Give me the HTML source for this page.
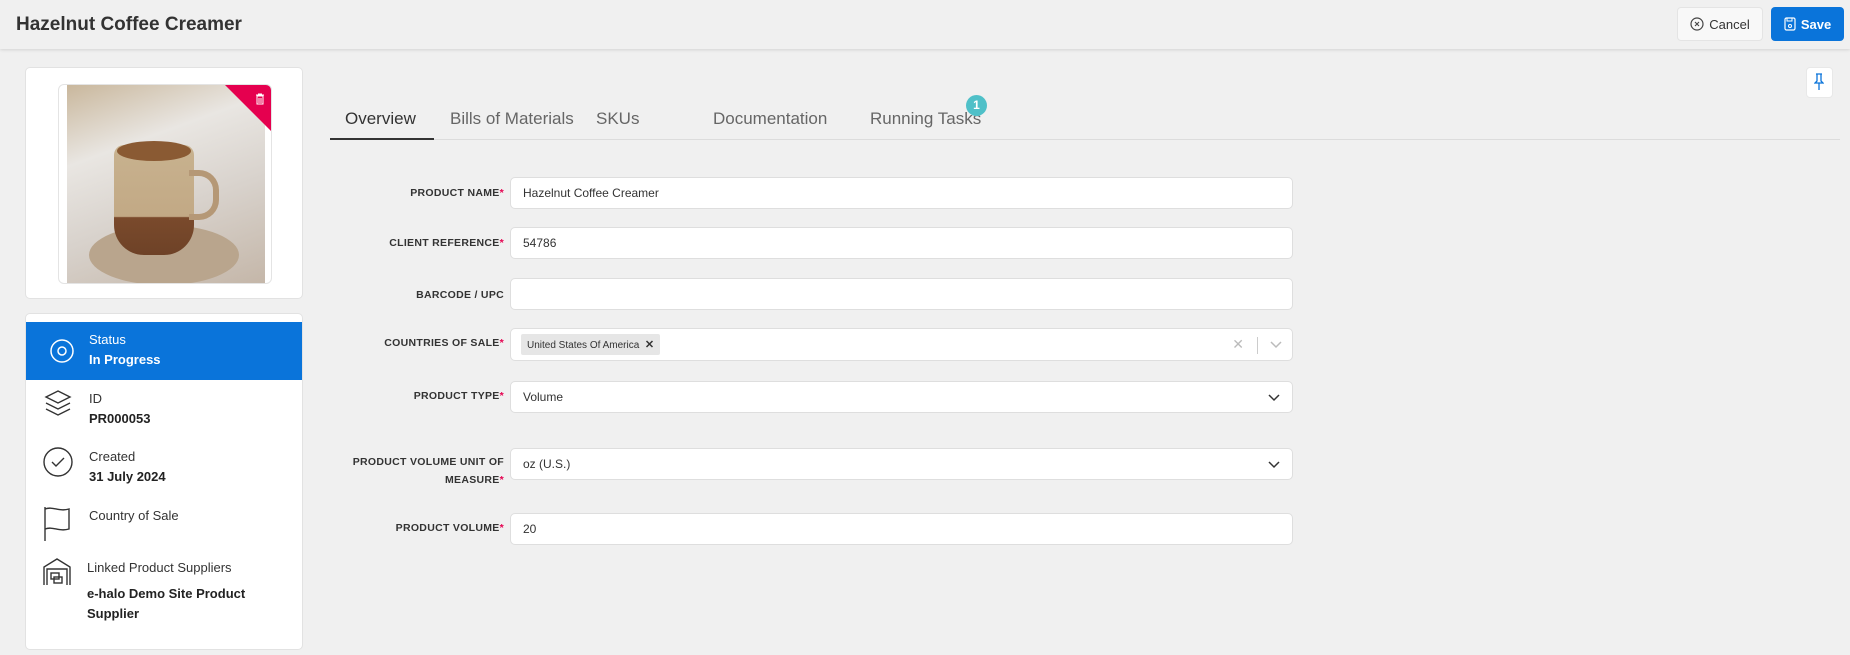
<!DOCTYPE html>
<html><head><meta charset="utf-8"><style>
*{box-sizing:border-box;margin:0;padding:0}
body{width:1850px;height:655px;background:#f0f0f0;font-family:"Liberation Sans",sans-serif;color:#333;position:relative;overflow:hidden}
.hdr{position:absolute;left:0;top:0;width:1850px;height:49px;background:#f0f0f0;box-shadow:0 1px 3px rgba(0,0,0,.12)}
.title{position:absolute;left:16px;top:14px;font-size:19px;font-weight:600;color:#333}
.btn{position:absolute;top:7px;height:34px;border-radius:4px;font-size:13px;font-weight:bold;display:flex;align-items:center;justify-content:center;gap:5px}
.card{position:absolute;background:#fff;border:1px solid #e2e2e2;border-radius:5px}
.abs{position:absolute}
.lab{position:absolute;right:1346px;font-size:10.5px;font-weight:bold;text-align:right;color:#333;line-height:18px;letter-spacing:.3px}
.lab i{color:#e5004f;font-style:normal}
.inp{position:absolute;left:510px;width:783px;height:32px;background:#fff;border:1px solid #dedede;border-radius:5px;font-size:12px;padding-left:12px;display:flex;align-items:center}
.tab{position:absolute;top:109px;font-size:17px;color:#666}
.row .l{font-size:13px;color:#333}
.row .v{font-size:13px;font-weight:bold;color:#222}
</style></head><body>
<div class="hdr"><div class="title">Hazelnut Coffee Creamer</div>
<div class="btn" style="left:1677px;width:86px;background:#f8f8f8;border:1px solid #e4e4e4;color:#333;font-weight:normal">
<svg width="14" height="14" viewBox="0 0 14 14"><circle cx="7" cy="7" r="6" fill="none" stroke="#444" stroke-width="1.2"/><path d="M5 5l4 4M9 5l-4 4" stroke="#444" stroke-width="1.1"/></svg>Cancel</div>
<div class="btn" style="left:1771px;width:73px;background:#0a74da;color:#fff">
<svg width="12" height="14" viewBox="0 0 12 14"><rect x="1" y="1" width="10" height="12" rx="1.5" fill="none" stroke="#fff" stroke-width="1.2"/><rect x="3" y="1" width="5" height="3" fill="none" stroke="#fff"/><circle cx="6" cy="9" r="1.5" fill="none" stroke="#fff"/></svg>Save</div>
</div>

<div class="card" style="left:25px;top:67px;width:278px;height:232px">
<div class="abs" style="left:32px;top:16px;width:214px;height:200px;border:1px solid #e4e4e4;border-radius:6px;overflow:hidden;background:#fff">
<div class="abs" style="left:8px;top:0;width:198px;height:200px;background:linear-gradient(160deg,#c9b79c 0,#e9e6e2 30%,#d8d2cc 60%,#c4b6a8 100%)"></div>
<div class="abs" style="left:30px;top:140px;width:150px;height:60px;border-radius:50%;background:#b9a58d"></div>
<div class="abs" style="left:55px;top:60px;width:80px;height:110px;border-radius:10px 10px 30px 30px;background:linear-gradient(180deg,#c8b28f 0,#c2a985 65%,#7a4a2c 66%,#6e4227 100%)"></div>
<div class="abs" style="left:58px;top:56px;width:74px;height:20px;border-radius:50%;background:#8a5a33"></div>
<div class="abs" style="left:130px;top:85px;width:30px;height:50px;border:6px solid #b59876;border-left:none;border-radius:0 20px 20px 0"></div>
<div class="abs" style="right:-1px;top:-1px;width:0;height:0;border-top:48px solid #e5004f;border-left:48px solid transparent"></div>
<svg class="abs" style="right:6px;top:8px" width="10" height="12" viewBox="0 0 10 12"><path d="M1 2h8M3.5 2V1h3v1M2 3h6v8H2zM4 5v5M6 5v5" fill="none" stroke="#fff" stroke-width="1"/></svg>
</div></div>

<div class="card row" style="left:25px;top:313px;width:278px;height:337px;overflow:hidden">
<div class="abs" style="left:0;top:8px;width:278px;height:58px;background:#0a74da"></div>
<svg class="abs" style="left:22px;top:23px" width="28" height="28" viewBox="0 0 28 28"><circle cx="14" cy="14" r="11" fill="none" stroke="#fff" stroke-width="1.5"/><circle cx="14" cy="14" r="4" fill="none" stroke="#fff" stroke-width="1.5"/></svg>
<div class="abs l" style="left:63px;top:18px;color:#fff">Status</div>
<div class="abs v" style="left:63px;top:38px;color:#fff">In Progress</div>
<svg class="abs" style="left:17px;top:74px" width="30" height="30" viewBox="0 0 30 30" fill="none" stroke="#333" stroke-width="1.4"><path d="M15 3l12 6-12 6L3 9z"/><path d="M3 15l12 6 12-6"/><path d="M3 21l12 6 12-6"/></svg>
<div class="abs l" style="left:63px;top:77px">ID</div>
<div class="abs v" style="left:63px;top:97px">PR000053</div>
<svg class="abs" style="left:16px;top:132px" width="32" height="32" viewBox="0 0 32 32" fill="none" stroke="#333" stroke-width="1.4"><circle cx="16" cy="16" r="14"/><path d="M10 16l4 4 8-8"/></svg>
<div class="abs l" style="left:63px;top:135px">Created</div>
<div class="abs v" style="left:63px;top:155px">31 July 2024</div>
<svg class="abs" style="left:16px;top:191px" width="30" height="36" viewBox="0 0 30 36" fill="none" stroke="#333" stroke-width="1.4"><path d="M3 2v34"/><path d="M3 4c8-3 14 3 24 0v20c-10 3-16-3-24 0"/></svg>
<div class="abs l" style="left:63px;top:194px">Country of Sale</div>
<svg class="abs" style="left:17px;top:244px" width="28" height="28" viewBox="0 0 28 28" fill="none" stroke="#333" stroke-width="1.4"><path d="M1 27V9L14 1l13 8v18"/><path d="M4 27V11h20v16"/><rect x="8" y="15" width="8" height="6"/><rect x="11" y="19" width="8" height="6"/></svg>
<div class="abs l" style="left:61px;top:246px">Linked Product Suppliers</div>
<div class="abs v" style="left:61px;top:270px;line-height:20px">e-halo Demo Site Product<br>Supplier</div>
</div>

<div class="tab" style="left:345px;color:#333">Overview</div>
<div class="tab" style="left:450px">Bills of Materials</div>
<div class="tab" style="left:596px">SKUs</div>
<div class="tab" style="left:713px">Documentation</div>
<div class="tab" style="left:870px">Running Tasks</div>
<div class="abs" style="left:966px;top:95px;width:21px;height:21px;border-radius:50%;background:#4fc0c8;color:#fff;font-size:12px;font-weight:bold;text-align:center;line-height:21px">1</div>
<div class="abs" style="left:330px;top:139px;width:1510px;height:1px;background:#dcdcdc"></div>
<div class="abs" style="left:330px;top:138px;width:104px;height:2px;background:#333"></div>
<div class="abs" style="left:1806px;top:67px;width:27px;height:31px;background:#fff;border:1px solid #e8e8e8;border-radius:4px"></div>
<svg class="abs" style="left:1814px;top:73px" width="10" height="18" viewBox="0 0 10 18" fill="none" stroke="#0a74da" stroke-width="1.3"><path d="M2 1h6M3 1v7L1 10h8L7 8V1M5 10v7"/></svg>

<div class="lab" style="top:184px">PRODUCT NAME<i>*</i></div>
<div class="inp" style="top:177px">Hazelnut Coffee Creamer</div>
<div class="lab" style="top:234px">CLIENT REFERENCE<i>*</i></div>
<div class="inp" style="top:227px">54786</div>
<div class="lab" style="top:286px">BARCODE / UPC</div>
<div class="inp" style="top:278px"></div>
<div class="lab" style="top:334px">COUNTRIES OF SALE<i>*</i></div>
<div class="inp" style="top:328px;height:33px;padding-left:10px">
<span style="background:#e6e6e6;font-size:10px;padding:4px 6px;border-radius:2px">United States Of America &nbsp;<b style="font-size:11px">✕</b></span>
<span class="abs" style="right:48px;top:7px;color:#bbb;font-size:14px">✕</span>
<span class="abs" style="right:34px;top:8px;width:1px;height:17px;background:#ccc"></span>
<svg class="abs" style="right:10px;top:12px" width="12" height="8" viewBox="0 0 12 8"><path d="M1 1l5 5 5-5" fill="none" stroke="#bbb" stroke-width="1.5"/></svg></div>
<div class="lab" style="top:387px">PRODUCT TYPE<i>*</i></div>
<div class="inp" style="top:381px">Volume<svg class="abs" style="right:12px;top:12px" width="12" height="8" viewBox="0 0 12 8"><path d="M1 1l5 5 5-5" fill="none" stroke="#333" stroke-width="1.5"/></svg></div>
<div class="lab" style="top:453px">PRODUCT VOLUME UNIT OF<br>MEASURE<i>*</i></div>
<div class="inp" style="top:448px">oz (U.S.)<svg class="abs" style="right:12px;top:12px" width="12" height="8" viewBox="0 0 12 8"><path d="M1 1l5 5 5-5" fill="none" stroke="#333" stroke-width="1.5"/></svg></div>
<div class="lab" style="top:519px">PRODUCT VOLUME<i>*</i></div>
<div class="inp" style="top:513px">20</div>
</body></html>
